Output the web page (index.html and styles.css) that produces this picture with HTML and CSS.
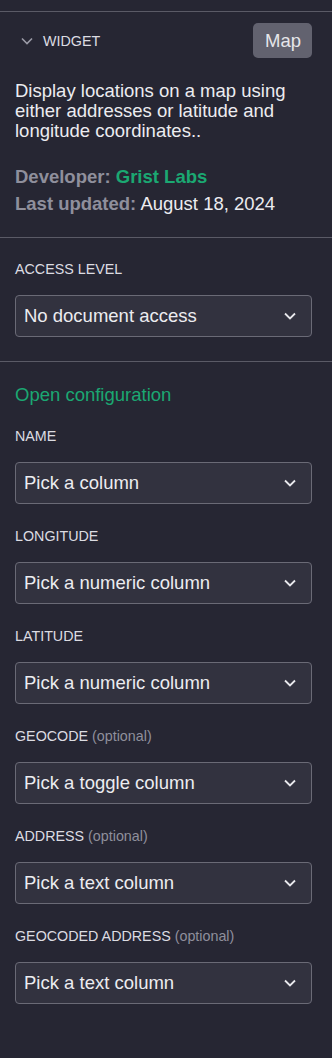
FILE: index.html
```html
<!DOCTYPE html>
<html>
<head>
<meta charset="utf-8">
<link rel="stylesheet" href="styles.css">
</head>
<body>
<div class="panel">
  <div class="rule-top"></div>
  <div class="header">
    <div class="header-left">
      <svg class="hchev" width="12" height="8" viewBox="0 0 12 8"><path d="M1 1.5 L6 6.5 L11 1.5" fill="none" stroke="#9a9aa6" stroke-width="1.6"/></svg>
      <span class="header-title">WIDGET</span>
    </div>
    <div class="map-btn">Map</div>
  </div>
  <p class="desc">Display locations on a map using either addresses or latitude and longitude coordinates..</p>
  <div class="meta">
    <div class="meta-row"><span class="meta-key">Developer:</span> <span class="meta-link">Grist Labs</span></div>
    <div class="meta-row"><span class="meta-key">Last updated:</span> <span class="meta-val">August 18, 2024</span></div>
  </div>
  <div class="rule"></div>
  <div class="access">
    <div class="label">ACCESS LEVEL</div>
    <div class="select"><span>No document access</span><svg class="chev" width="12" height="8" viewBox="0 0 12 8"><path d="M1 1.5 L6 6.5 L11 1.5" fill="none" stroke="#e8e8ec" stroke-width="1.8"/></svg></div>
  </div>
  <div class="rule"></div>
  <div class="config">
    <div class="open-config">Open configuration</div>
    <div class="field">
      <div class="label">NAME</div>
      <div class="select"><span>Pick a column</span><svg class="chev" width="12" height="8" viewBox="0 0 12 8"><path d="M1 1.5 L6 6.5 L11 1.5" fill="none" stroke="#e8e8ec" stroke-width="1.8"/></svg></div>
    </div>
    <div class="field">
      <div class="label">LONGITUDE</div>
      <div class="select"><span>Pick a numeric column</span><svg class="chev" width="12" height="8" viewBox="0 0 12 8"><path d="M1 1.5 L6 6.5 L11 1.5" fill="none" stroke="#e8e8ec" stroke-width="1.8"/></svg></div>
    </div>
    <div class="field">
      <div class="label">LATITUDE</div>
      <div class="select"><span>Pick a numeric column</span><svg class="chev" width="12" height="8" viewBox="0 0 12 8"><path d="M1 1.5 L6 6.5 L11 1.5" fill="none" stroke="#e8e8ec" stroke-width="1.8"/></svg></div>
    </div>
    <div class="field">
      <div class="label">GEOCODE <span class="opt">(optional)</span></div>
      <div class="select"><span>Pick a toggle column</span><svg class="chev" width="12" height="8" viewBox="0 0 12 8"><path d="M1 1.5 L6 6.5 L11 1.5" fill="none" stroke="#e8e8ec" stroke-width="1.8"/></svg></div>
    </div>
    <div class="field">
      <div class="label">ADDRESS <span class="opt">(optional)</span></div>
      <div class="select"><span>Pick a text column</span><svg class="chev" width="12" height="8" viewBox="0 0 12 8"><path d="M1 1.5 L6 6.5 L11 1.5" fill="none" stroke="#e8e8ec" stroke-width="1.8"/></svg></div>
    </div>
    <div class="field">
      <div class="label">GEOCODED ADDRESS <span class="opt">(optional)</span></div>
      <div class="select"><span>Pick a text column</span><svg class="chev" width="12" height="8" viewBox="0 0 12 8"><path d="M1 1.5 L6 6.5 L11 1.5" fill="none" stroke="#e8e8ec" stroke-width="1.8"/></svg></div>
    </div>
  </div>
</div>
</body>
</html>
```
FILE: styles.css
```css
html, body {
  margin: 0;
  padding: 0;
  background: #262633;
}
body {
  font-family: "Liberation Sans", Arial, sans-serif;
  color: #e8e8ec;
  width: 332px;
  min-height: 1058px;
}
.panel {
  display: flex;
  flex-direction: column;
}
.rule-top {
  height: 11px;
  border-bottom: 1px solid #5a5a66;
}
.rule {
  height: 0;
  border-bottom: 1px solid #5a5a66;
}
.header {
  display: flex;
  align-items: center;
  justify-content: space-between;
  margin-top: 11px;
  padding: 0 20px 0 21px;
  height: 35px;
}
.header-left {
  display: flex;
  align-items: center;
  gap: 10px;
}
.hchev {
  display: block;
}
.header-title {
  font-size: 14.3px;
  line-height: 16px;
  color: #dcdce2;
}
.map-btn {
  height: 35px;
  line-height: 35px;
  padding: 0 11px 0 12px;
  background: #62626f;
  border-radius: 5px;
  font-size: 18.5px;
  color: #e6e6ea;
}
.desc {
  margin: 23px 20px 0 15px;
  font-size: 18.5px;
  line-height: 20px;
  color: #ececf0;
}
.meta {
  margin: 22px 20px 20px 15px;
}
.meta-row {
  font-size: 18.5px;
  line-height: 27px;
}
.meta-key {
  font-weight: bold;
  color: #8f8f9c;
}
.meta-link {
  font-weight: bold;
  color: #1ba872;
}
.meta-val {
  color: #ececf0;
}
.access {
  padding: 23px 20px 24px 15px;
}
.label {
  font-size: 14.3px;
  line-height: 16px;
  color: #dcdce2;
  margin-bottom: 18px;
}
.opt {
  color: #8f8f9c;
}
.select {
  box-sizing: border-box;
  height: 42px;
  border: 1px solid #6a6a76;
  border-radius: 4px;
  background: #32323f;
  display: flex;
  align-items: center;
  justify-content: space-between;
  padding: 0 15px 0 8px;
  font-size: 18.5px;
  line-height: 40px;
  color: #ececf0;
}
.chev {
  display: block;
}
.config {
  padding: 23px 20px 0 15px;
}
.open-config {
  font-size: 18.5px;
  line-height: 20px;
  color: #1ba872;
  margin-bottom: 23px;
}
.field {
  margin-bottom: 24px;
}
```
